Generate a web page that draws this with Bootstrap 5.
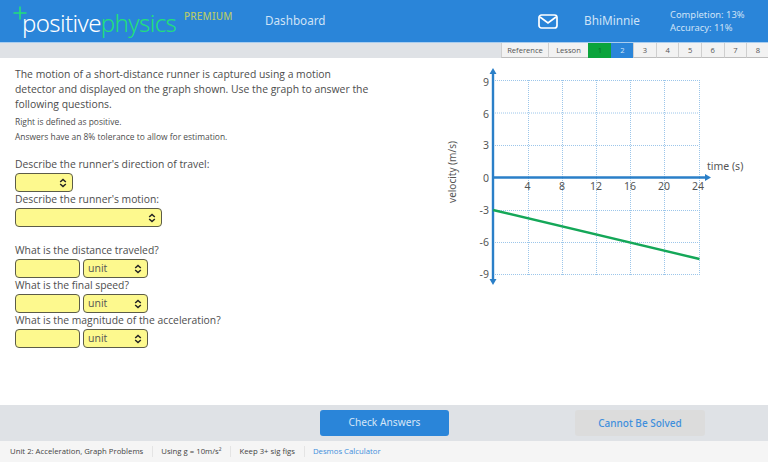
<!DOCTYPE html>
<html lang="en">
<head>
<meta charset="utf-8">
<title>Positive Physics</title>
<link href="https://cdn.jsdelivr.net/npm/bootstrap@5.3.0/dist/css/bootstrap.min.css" rel="stylesheet">
<style>
html,body{height:100%;overflow:hidden}
body{font-family:"Open Sans","Noto Sans",sans-serif;color:#4d4d4d;font-size:11px;background:#fff}
.page-shell{height:462px}
.top-head{height:42px;background:#2a85d9;color:#cfe3f7;border-bottom:0}
.brand-wrap{width:265px;padding-left:22px;position:relative;font-family:"Noto Sans",sans-serif;font-size:24px;letter-spacing:-.6px;line-height:46px;height:42px;font-weight:300}
.brand-plus{position:absolute;left:13px;top:6px}
.brand-a{color:#fff}.brand-b{color:#22e07a}
.brand-prem{font-size:10px;line-height:12px;color:#b5c96c;font-weight:500;letter-spacing:.2px;position:absolute;left:184px;top:10px}
.dash-link{width:273px;font-family:"Noto Sans",sans-serif;font-size:11.7px;color:#cfe3f7}
.mail-cell{width:46px}
.user-cell{width:86px;font-family:"Noto Sans",sans-serif;font-size:11.8px}
.stats-cell{font-family:"Noto Sans",sans-serif;font-size:9.4px;line-height:13.5px}
.tab-bar{height:16px;background:#dfe2e6;border-top:1px solid #a9cdef;padding-left:501px}
.tab-cell{height:15px;line-height:14px;font-size:7.6px;text-align:center;background:#f2f2f2;border-left:1px solid #cfcfcf;border-bottom:1px solid #bdbdbd;color:#555;flex:0 0 auto}
.tab-wide{width:47px}.tab-mid{width:40px}.tab-num{width:22.6px}
.tab-ok{background:#0ba43c;color:#0a6d28;border-color:#0ba43c}
.tab-now{background:#2a85d9;color:#cfe3f7;border-color:#2a85d9}
.work-area{height:347px}
.left-col{width:440px;padding:9px 0 0 15px}
.q-text{line-height:15px;font-size:10.4px;margin:0;white-space:nowrap}
.q-note{font-size:8.45px;line-height:15px;margin:0}
.q-note-first{margin-top:2px}
.q-label{font-size:10.35px;line-height:15px;height:16px;margin:0}
.gap-a{height:16px}.gap-b{height:13px}
.ans{display:block;height:19px;border:1px solid #5c5c48;border-radius:4px;background-color:#fdf98e;box-shadow:none;font-size:10.5px;color:#555;padding:0 4px;font-family:inherit;outline:0}
select.ans{appearance:none;background-image:url("data:image/svg+xml,%3Csvg xmlns='http://www.w3.org/2000/svg' width='8' height='10'%3E%3Cpath d='M1.2 4 4 1.5 6.8 4M1.2 6 4 8.5 6.8 6' fill='none' stroke='%23222' stroke-width='1.5'/%3E%3C/svg%3E");background-repeat:no-repeat;background-position:right 5px center}
.w-s{width:58px}.w-l{width:147px}.w-i{width:65px}.w-u{width:65px;margin-left:3px}
.ans-wrap{height:19px}
.graph-col{flex:1 1 auto}
.graph-svg{display:block}
.graph-svg text{font-family:"Noto Sans",sans-serif;fill:#555;font-size:10.5px}
.action-bar{height:36px;background:#dfe2e6}
.act-left{width:320px}
.act-btn{height:26px;padding:0;font-size:10.2px;border-radius:3px;border:0;font-family:"Noto Sans",sans-serif}
.act-main{width:129px;background:#2a85d9;color:#d5e6f7}
.act-gap{width:126px}
.act-sec{width:130px;background:#dcdcdc;color:#3f8fdc;font-weight:500;font-size:10px}
.foot-bar{height:21px;background:#f5f5f5;font-size:7.75px;padding-left:10px;color:#444}
.foot-item{padding-right:9px;margin-right:8px;border-right:1px solid #e4e4e4;line-height:11px}
.foot-link{color:#3f8fdc;text-decoration:none}
</style>
</head>
<body>
<div class="page-shell d-flex flex-column">
  <header class="top-head d-flex align-items-center">
    <div class="brand-wrap">
      <svg class="brand-plus" width="14" height="14" viewBox="0 0 14 14"><path d="M7 .5v13M.5 7h13" stroke="#22e07a" stroke-width="1.6"/></svg>
      <span class="brand-a">positive</span><span class="brand-b">physics</span>
      <span class="brand-prem">PREMIUM</span>
    </div>
    <a class="dash-link text-decoration-none" href="#">Dashboard</a>
    <div class="mail-cell">
      <svg class="d-block" width="20" height="15" viewBox="0 0 20 15"><rect x="1" y="1" width="18" height="13" rx="2.5" fill="none" stroke="#fff" stroke-width="1.7"/><path d="M2 3l8 6 8-6" fill="none" stroke="#fff" stroke-width="1.7"/></svg>
    </div>
    <div class="user-cell">BhiMinnie</div>
    <div class="stats-cell"><div>Completion: 13%</div><div>Accuracy: 11%</div></div>
  </header>
  <nav class="tab-bar d-flex">
    <div class="tab-cell tab-wide">Reference</div>
    <div class="tab-cell tab-mid">Lesson</div>
    <div class="tab-cell tab-num tab-ok">1</div>
    <div class="tab-cell tab-num tab-now">2</div>
    <div class="tab-cell tab-num">3</div>
    <div class="tab-cell tab-num">4</div>
    <div class="tab-cell tab-num">5</div>
    <div class="tab-cell tab-num">6</div>
    <div class="tab-cell tab-num">7</div>
    <div class="tab-cell tab-num">8</div>
  </nav>
  <main class="work-area d-flex">
    <div class="left-col">
      <p class="q-text">The motion of a short-distance runner is captured using a motion<br>detector and displayed on the graph shown. Use the graph to answer the<br>following questions.</p>
      <p class="q-note q-note-first">Right is defined as positive.</p>
      <p class="q-note">Answers have an 8% tolerance to allow for estimation.</p>
      <div class="gap-b"></div>
      <p class="q-label">Describe the runner's direction of travel:</p>
      <div class="ans-wrap"><select class="ans w-s" aria-label="direction"><option></option></select></div>
      <p class="q-label">Describe the runner's motion:</p>
      <div class="ans-wrap"><select class="ans w-l" aria-label="motion"><option></option></select></div>
      <div class="gap-a"></div>
      <p class="q-label">What is the distance traveled?</p>
      <div class="d-flex"><input class="ans w-i" aria-label="distance"><select class="ans w-u" aria-label="unit"><option>unit</option></select></div>
      <p class="q-label">What is the final speed?</p>
      <div class="d-flex"><input class="ans w-i" aria-label="speed"><select class="ans w-u" aria-label="unit"><option>unit</option></select></div>
      <p class="q-label">What is the magnitude of the acceleration?</p>
      <div class="d-flex"><input class="ans w-i" aria-label="acceleration"><select class="ans w-u" aria-label="unit"><option>unit</option></select></div>
    </div>
    <div class="graph-col">
      <svg class="graph-svg" width="328" height="240" viewBox="440 58 328 240">
        <g stroke="#9cc6ea" stroke-width="1" stroke-dasharray="1 1" fill="none">
          <path d="M493 80.5H699M493 113H699M493 145.5H699M493 210.5H699M493 242.5H699M493 274.5H699"/>
          <path d="M528.5 80V275M562.5 80V275M596.5 80V275M630.5 80V275M664.5 80V275M699.5 80V275"/>
        </g>
        <path d="M493 73V280" stroke="#2a7fc8" stroke-width="2.4"/>
        <path d="M493 68l-3.5 6h7zM493 285l-3.5-6h7z" fill="#2a7fc8"/>
        <path d="M492 177.5H706" stroke="#2a7fc8" stroke-width="2.4"/>
        <path d="M711 177.5l-6-3.5v7z" fill="#2a7fc8"/>
        <path d="M493 210L699.5 259" stroke="#14a758" stroke-width="2.4"/>
        <g text-anchor="end">
          <text x="489" y="86">9</text><text x="489" y="118">6</text><text x="489" y="149">3</text><text x="489" y="182">0</text><text x="489" y="214">-3</text><text x="489" y="246">-6</text><text x="489" y="278">-9</text>
        </g>
        <g text-anchor="middle">
          <text x="527.5" y="190">4</text><text x="562" y="190">8</text><text x="596" y="190">12</text><text x="630" y="190">16</text><text x="664" y="190">20</text><text x="698" y="190">24</text>
        </g>
        <text x="707" y="170">time (s)</text>
        <text transform="translate(456 172) rotate(-90)" text-anchor="middle" style="font-size:10px">velocity (m/s)</text>
      </svg>
    </div>
  </main>
  <section class="action-bar d-flex align-items-center">
    <div class="act-left"></div>
    <button class="act-btn act-main" type="button">Check Answers</button>
    <div class="act-gap"></div>
    <button class="act-btn act-sec" type="button">Cannot Be Solved</button>
  </section>
  <footer class="foot-bar d-flex align-items-center">
    <span class="foot-item">Unit 2: Acceleration, Graph Problems</span>
    <span class="foot-item">Using g = 10m/s²</span>
    <span class="foot-item">Keep 3+ sig figs</span>
    <a class="foot-link" href="#">Desmos Calculator</a>
  </footer>
</div>
<script src="https://cdn.jsdelivr.net/npm/bootstrap@5.3.0/dist/js/bootstrap.bundle.min.js"></script>
</body>
</html>
